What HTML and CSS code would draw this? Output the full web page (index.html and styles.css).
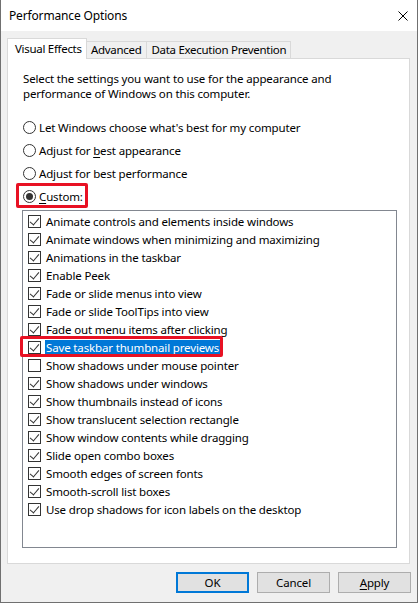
FILE: index.html
```html
<!DOCTYPE html>
<html>
<head>
<meta charset="utf-8">
<title>Performance Options</title>
<link rel="stylesheet" href="styles.css">
</head>
<body>
<div class="window">
  <div class="titlebar">
    <span class="title">Performance Options</span>
    <svg class="close" width="10" height="10" viewBox="0 0 10 10"><path d="M0.5 0.5L9.5 9.5M9.5 0.5L0.5 9.5" stroke="#000" stroke-width="1" fill="none"/></svg>
  </div>
  <div class="body">
    <div class="tabs">
      <div class="tab active">Visual Effects</div>
      <div class="tab tab-adv">Advanced</div>
      <div class="tab tab-dep">Data Execution Prevention</div>
    </div>
    <div class="panel">
      <p class="desc">Select the settings you want to use for the appearance and<br>performance of Windows on this computer.</p>
      <div class="radios">
        <div class="radio"><span class="circle"></span><span>Let Windows choose what's best for my computer</span></div>
        <div class="radio"><span class="circle"></span><span>Adjust for <u>b</u>est appearance</span></div>
        <div class="radio"><span class="circle"></span><span>Adjust for best performance</span></div>
        <div class="radio"><span class="mark"><span class="circle on"></span><span><u>C</u>ustom:</span></span></div>
      </div>
      <div class="listbox">
        <div class="item"><span class="cb on"></span><span class="lbl">Animate controls and elements inside windows</span></div>
        <div class="item"><span class="cb on"></span><span class="lbl">Animate windows when minimizing and maximizing</span></div>
        <div class="item"><span class="cb on"></span><span class="lbl">Animations in the taskbar</span></div>
        <div class="item"><span class="cb on"></span><span class="lbl">Enable Peek</span></div>
        <div class="item"><span class="cb on"></span><span class="lbl">Fade or slide menus into view</span></div>
        <div class="item"><span class="cb on"></span><span class="lbl">Fade or slide ToolTips into view</span></div>
        <div class="item"><span class="cb on"></span><span class="lbl">Fade out menu items after clicking</span></div>
        <div class="item"><span class="mark"><span class="cb on"></span><span class="lbl sel">Save taskbar thumbnail previews</span></span></div>
        <div class="item"><span class="cb"></span><span class="lbl">Show shadows under mouse pointer</span></div>
        <div class="item"><span class="cb on"></span><span class="lbl">Show shadows under windows</span></div>
        <div class="item"><span class="cb on"></span><span class="lbl">Show thumbnails instead of icons</span></div>
        <div class="item"><span class="cb on"></span><span class="lbl">Show translucent selection rectangle</span></div>
        <div class="item"><span class="cb on"></span><span class="lbl">Show window contents while dragging</span></div>
        <div class="item"><span class="cb on"></span><span class="lbl">Slide open combo boxes</span></div>
        <div class="item"><span class="cb on"></span><span class="lbl">Smooth edges of screen fonts</span></div>
        <div class="item"><span class="cb on"></span><span class="lbl">Smooth-scroll list boxes</span></div>
        <div class="item"><span class="cb on"></span><span class="lbl">Use drop shadows for icon labels on the desktop</span></div>
      </div>
    </div>
    <div class="buttons">
      <div class="btn default">OK</div>
      <div class="btn">Cancel</div>
      <div class="btn"><u>A</u>pply</div>
    </div>
  </div>
</div>
</body>
</html>
```

FILE: styles.css
```css
html, body {
  margin: 0;
  padding: 0;
  background: #fff;
}
body {
  font-family: "Segoe UI", "Noto Sans", sans-serif;
  font-size: 11.5px;
  letter-spacing: -0.15px;
  color: #000;
}
u {
  text-decoration: underline;
  text-underline-offset: 2px;
}
.window {
  width: 418px;
  height: 603px;
  box-sizing: border-box;
  border: 1px solid #707070;
  border-top: none;
  display: flex;
  flex-direction: column;
}
.titlebar {
  height: 31px;
  flex: none;
  background: #fff;
  display: flex;
  align-items: center;
  justify-content: space-between;
  padding: 0 9px 0 8px;
  font-size: 12px;
}
.close {
  display: block;
}
.body {
  flex: 1;
  background: #f0f0f0;
  padding: 7px 7px 0 6px;
  display: flex;
  flex-direction: column;
}
.tabs {
  display: flex;
  align-items: flex-end;
  height: 20px;
  flex: none;
}
.tab {
  box-sizing: border-box;
  height: 17px;
  border: 1px solid #d9d9d9;
  border-bottom: none;
  background: #f0f0f0;
  line-height: 16px;
  white-space: nowrap;
  padding-right: 4px;
  letter-spacing: -0.3px;
}
.tab.active {
  position: relative;
  z-index: 1;
  min-width: 80px;
  height: 21px;
  margin-bottom: -1px;
  background: #fff;
  padding-left: 7px;
  line-height: 19px;
}
.tab-adv {
  min-width: 58px;
  border-left: none;
  padding-left: 4px;
}
.tab-dep {
  min-width: 138px;
  border-left: none;
  padding-left: 5px;
}
.panel {
  flex: none;
  height: 506px;
  box-sizing: border-box;
  background: #fff;
  border: 1px solid #d9d9d9;
  padding: 12px 12px 0 15px;
}
.desc {
  margin: 0;
  line-height: 15px;
}
.radios {
  margin-top: 15px;
}
.radio {
  height: 23px;
  display: flex;
  align-items: center;
}
.circle {
  width: 13px;
  height: 13px;
  box-sizing: border-box;
  border: 1px solid #333;
  border-radius: 50%;
  background: #fff;
  margin-right: 3px;
  flex: none;
  display: flex;
  align-items: center;
  justify-content: center;
}
.circle.on::before {
  content: "";
  width: 7px;
  height: 7px;
  border-radius: 50%;
  background: #333;
}
.mark {
  position: relative;
  display: inline-flex;
  align-items: center;
  height: 100%;
}
.radio .mark::after {
  content: "";
  position: absolute;
  left: -7px;
  right: -5px;
  top: -2px;
  bottom: 0;
  box-sizing: border-box;
  border: 3px solid #e81123;
  border-radius: 2px;
}
.listbox {
  margin-left: -1px;
  margin-top: 2px;
  width: 375px;
  height: 338px;
  box-sizing: border-box;
  border: 1px solid #828790;
  padding: 1px 0 0 5px;
}
.item {
  height: 18px;
  display: flex;
  align-items: center;
  white-space: nowrap;
}
.cb {
  position: relative;
  width: 13px;
  height: 13px;
  box-sizing: border-box;
  border: 1px solid #333;
  background: #fff;
  margin-right: 5px;
  flex: none;
}
.cb.on::after {
  content: "";
  position: absolute;
  left: 3px;
  top: 0px;
  width: 4px;
  height: 8px;
  border: solid #333;
  border-width: 0 1px 1px 0;
  transform: rotate(40deg);
}
.lbl.sel {
  background: #0078d7;
  color: #fff;
  margin-left: -1px;
  padding: 0 1px;
  line-height: 15px;
}
.item .mark::after {
  content: "";
  position: absolute;
  left: -8px;
  right: -3px;
  top: -2px;
  bottom: -1px;
  box-sizing: border-box;
  border: 3px solid #e81123;
  border-radius: 2px;
}
.buttons {
  margin-top: 8px;
  margin-right: -1px;
  display: flex;
  justify-content: flex-end;
  gap: 8px;
}
.btn {
  width: 73px;
  height: 21px;
  box-sizing: border-box;
  border: 1px solid #adadad;
  background: #e1e1e1;
  display: flex;
  align-items: center;
  justify-content: center;
}
.btn.default {
  border: 2px solid #0078d7;
}
```
